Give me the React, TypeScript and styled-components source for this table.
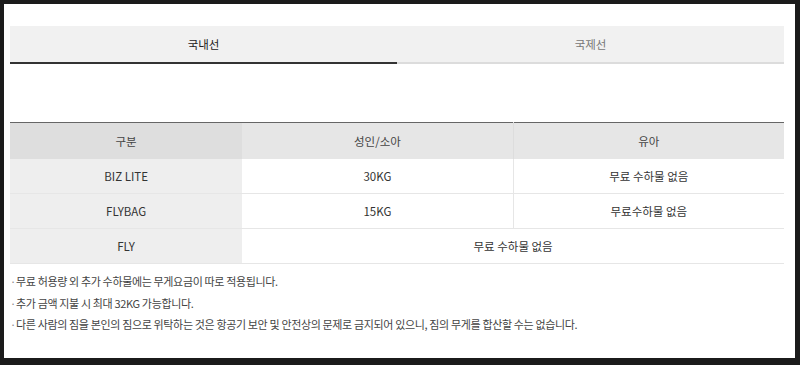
import styled, { createGlobalStyle } from 'styled-components'

const GlobalStyle = createGlobalStyle`
  html, body {
    margin: 0;
    padding: 0;
    background: #1b1b1b;
  }
  body {
    font-family: "Noto Sans CJK KR", "Noto Sans", sans-serif;
  }
`

interface BaggageRow {
  label: string
  adult: string
  infant?: string
}

const rows: BaggageRow[] = [
  { label: 'BIZ LITE', adult: '30KG', infant: '무료 수하물 없음' },
  { label: 'FLYBAG', adult: '15KG', infant: '무료수하물 없음' },
  { label: 'FLY', adult: '무료 수하물 없음' },
]

const notes = [
  '무료 허용량 외 추가 수하물에는 무게요금이 따로 적용됩니다.',
  '추가 금액 지불 시 최대 32KG 가능합니다.',
  '다른 사람의 짐을 본인의 짐으로 위탁하는 것은 항공기 보안 및 안전상의 문제로 금지되어 있으니, 짐의 무게를 합산할 수는 없습니다.',
]

const Frame = styled.div`
  box-sizing: border-box;
  height: 365px;
  padding: 4px 5px 7px 4px;
`

const Panel = styled.div`
  box-sizing: border-box;
  height: 100%;
  background: #fff;
  padding: 22px 11px 0 6px;
`

const TabBar = styled.div`
  display: grid;
  grid-template-columns: 1fr 1fr;
`

const TabItem = styled.div<{ $active?: boolean }>`
  box-sizing: border-box;
  height: 38px;
  line-height: 36px;
  text-align: center;
  background: #f1f1f1;
  font-size: 11.5px;
  color: ${({ $active }) => ($active ? '#222' : '#777')};
  border-bottom: 2px solid ${({ $active }) => ($active ? '#333' : '#dcdcdc')};
`

const BaggageTable = styled.table`
  width: 100%;
  margin-top: 58px;
  border-collapse: collapse;
  border-top: 1px solid #666;
  table-layout: fixed;
  font-size: 11.5px;
`

const HeadCell = styled.th<{ $first?: boolean }>`
  height: 36px;
  padding: 0;
  font-weight: normal;
  color: #444;
  background: ${({ $first }) => ($first ? '#dedede' : '#e6e6e6')};
  border-right: ${({ $first }) => ($first ? 'none' : '1px solid #dddddd')};

  &:last-child {
    border-right: none;
  }
`

const BodyCell = styled.td<{ $label?: boolean }>`
  height: 34px;
  padding: 0;
  text-align: center;
  color: #333;
  background: ${({ $label }) => ($label ? '#eeeeee' : '#fff')};
  border-bottom: 1px solid #e6e6e6;
  border-right: ${({ $label }) => ($label ? 'none' : '1px solid #e6e6e6')};

  &:last-child {
    border-right: none;
  }
`

const NoteList = styled.ul`
  list-style: none;
  margin: 7px 0 0;
  padding: 0;
`

const NoteItem = styled.li`
  position: relative;
  padding-left: 6px;
  font-size: 11px;
  letter-spacing: -0.35px;
  line-height: 21.5px;
  color: #444;

  &::before {
    content: '·';
    position: absolute;
    left: 0;
    top: 0;
    color: #888;
  }
`

export default function App() {
  return (
    <>
      <GlobalStyle />
      <Frame>
        <Panel>
          <TabBar>
            <TabItem $active>국내선</TabItem>
            <TabItem>국제선</TabItem>
          </TabBar>

          <BaggageTable>
            <colgroup>
              <col style={{ width: '30%' }} />
              <col style={{ width: '35%' }} />
              <col style={{ width: '35%' }} />
            </colgroup>
            <thead>
              <tr>
                <HeadCell $first>구분</HeadCell>
                <HeadCell>성인/소아</HeadCell>
                <HeadCell>유아</HeadCell>
              </tr>
            </thead>
            <tbody>
              {rows.map((row) => (
                <tr key={row.label}>
                  <BodyCell $label>{row.label}</BodyCell>
                  {row.infant ? (
                    <>
                      <BodyCell>{row.adult}</BodyCell>
                      <BodyCell>{row.infant}</BodyCell>
                    </>
                  ) : (
                    <BodyCell colSpan={2}>{row.adult}</BodyCell>
                  )}
                </tr>
              ))}
            </tbody>
          </BaggageTable>

          <NoteList>
            {notes.map((note) => (
              <NoteItem key={note}>{note}</NoteItem>
            ))}
          </NoteList>
        </Panel>
      </Frame>
    </>
  )
}
